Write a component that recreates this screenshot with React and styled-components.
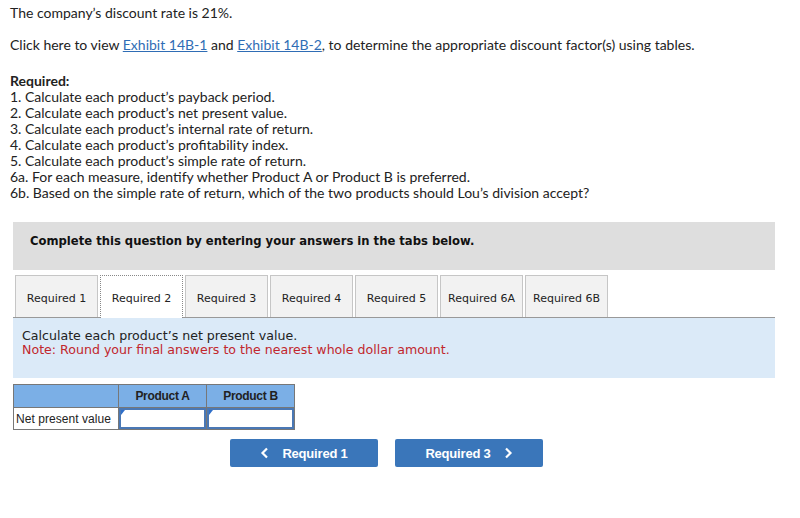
import styled, { createGlobalStyle } from "styled-components";

const GlobalStyle = createGlobalStyle`
  body {
    margin: 0;
    background: #ffffff;
  }
`;

const tabs = ["Required 1", "Required 2", "Required 3", "Required 4", "Required 5", "Required 6A", "Required 6B"];

const steps = [
  "1. Calculate each product’s payback period.",
  "2. Calculate each product’s net present value.",
  "3. Calculate each product’s internal rate of return.",
  "4. Calculate each product’s profitability index.",
  "5. Calculate each product’s simple rate of return.",
  "6a. For each measure, identify whether Product A or Product B is preferred.",
  "6b. Based on the simple rate of return, which of the two products should Lou’s division accept?",
];

export default function App() {
  return (
    <Page>
      <GlobalStyle />
      <Intro>
        <p>The company’s discount rate is 21%.</p>
        <p>
          Click here to view <a href="#">Exhibit 14B-1</a> and <a href="#">Exhibit 14B-2</a>, to determine the
          appropriate discount factor(s) using tables.
        </p>
        <div>
          <strong>Required:</strong>
          {steps.map((s) => (
            <div key={s}>{s}</div>
          ))}
        </div>
      </Intro>

      <Workspace>
        <Banner>Complete this question by entering your answers in the tabs below.</Banner>

        <TabRow>
          {tabs.map((t, i) => (
            <Tab key={t} active={i === 1}>{t}</Tab>
          ))}
        </TabRow>

        <Instructions>
          <div>Calculate each product’s net present value.</div>
          <Note>Note: Round your final answers to the nearest whole dollar amount.</Note>
        </Instructions>

        <AnswerTable>
          <thead>
            <tr>
              <HeadCell style={{ width: 104 }}></HeadCell>
              <HeadCell style={{ width: 87 }}>Product A</HeadCell>
              <HeadCell style={{ width: 87 }}>Product B</HeadCell>
            </tr>
          </thead>
          <tbody>
            <tr>
              <LabelCell>Net present value</LabelCell>
              <InputCell><Flag /></InputCell>
              <InputCell><Flag /></InputCell>
            </tr>
          </tbody>
        </AnswerTable>

        <NavRow>
          <NavButton>
            <Chevron viewBox="0 0 10 12"><path d="M7 1.5 L2.5 6 L7 10.5" /></Chevron>
            Required 1
          </NavButton>
          <NavButton>
            Required 3
            <Chevron viewBox="0 0 10 12"><path d="M3 1.5 L7.5 6 L3 10.5" /></Chevron>
          </NavButton>
        </NavRow>
      </Workspace>
    </Page>
  );
}

const Page = styled.div`
  padding: 5px 10px 40px 10px;
  width: 780px;
  box-sizing: border-box;
`;

const Intro = styled.div`
  font-family: "Lato", "Liberation Sans", sans-serif;
  font-size: 14px;
  line-height: 16px;
  color: #222;

  p {
    margin: 0 0 16px 0;
  }

  p + p {
    margin-bottom: 20px;
  }

  a {
    color: #2f6db5;
    text-decoration: underline;
  }

  strong {
    display: block;
    font-weight: 700;
  }
`;

const Workspace = styled.div`
  margin: 21px 0 0 3px;
  width: 762px;
`;

const Banner = styled.div`
  background: #dedede;
  height: 48px;
  box-sizing: border-box;
  padding: 12px 17px 0;
  font-family: "DejaVu Sans", Verdana, sans-serif;
  font-size: 11.6px;
  font-weight: 700;
  color: #111;
`;

const TabRow = styled.div`
  display: flex;
  gap: 2px;
  margin-top: 5px;
  padding-left: 2px;
  border-bottom: 1px solid #999;
`;

const Tab = styled.div`
  width: 83px;
  box-sizing: border-box;
  display: flex;
  align-items: center;
  justify-content: center;
  padding-top: 3px;
  font-family: "DejaVu Sans", Verdana, sans-serif;
  font-size: 11px;
  color: #222;
  background: ${({ active }) => (active ? "#ffffff" : "#f2f2f2")};
  border: 1px ${({ active }) => (active ? "dotted #888" : "solid #c6c6c6")};
  border-bottom: none;
  margin-bottom: ${({ active }) => (active ? "-1px" : "0")};
  height: ${({ active }) => (active ? "43px" : "42px")};
`;

const Instructions = styled.div`
  background: #dbeaf8;
  height: 60px;
  box-sizing: border-box;
  padding: 11px 9px 0;
  font-family: "DejaVu Sans", Verdana, sans-serif;
  font-size: 12.6px;
  line-height: 14px;
  color: #222;
`;

const Note = styled.div`
  color: #c1272d;
`;

const AnswerTable = styled.table`
  margin-top: 6px;
  border-collapse: collapse;
  font-family: "Liberation Sans", Arial, sans-serif;
  font-size: 12px;
  color: #222;
`;

const HeadCell = styled.th`
  background: #7bafe6;
  border: 1px solid #777;
  height: 22px;
  padding: 0;
  font-weight: 700;
  letter-spacing: -0.3px;
  color: #222;
`;

const LabelCell = styled.td`
  border: 1px solid #777;
  height: 21px;
  padding: 0 2px;
  letter-spacing: 0.05px;
  white-space: nowrap;
`;

const InputCell = styled.td`
  position: relative;
  border: 1px solid #777;
  padding: 0;
  box-shadow: inset 0 0 0 2px #4a78b5;
  background: #fff;
`;

const Flag = styled.span`
  position: absolute;
  left: 2px;
  top: 2px;
  width: 0;
  height: 0;
  border-top: 5px solid #2f6fc9;
  border-right: 4px solid transparent;
`;

const NavRow = styled.div`
  display: flex;
  gap: 17px;
  margin-top: 9px;
  padding-left: 217px;
`;

const NavButton = styled.button`
  width: 148px;
  height: 28px;
  display: flex;
  align-items: center;
  justify-content: center;
  gap: 12px;
  background: #3a76ba;
  border: none;
  border-radius: 2px;
  color: #fff;
  font-family: "Liberation Sans", Arial, sans-serif;
  font-size: 13px;
  font-weight: 700;
  letter-spacing: -0.2px;
  cursor: pointer;
`;

const Chevron = styled.svg`
  width: 10px;
  height: 12px;
  fill: none;
  stroke: #fff;
  stroke-width: 2.2;
`;
